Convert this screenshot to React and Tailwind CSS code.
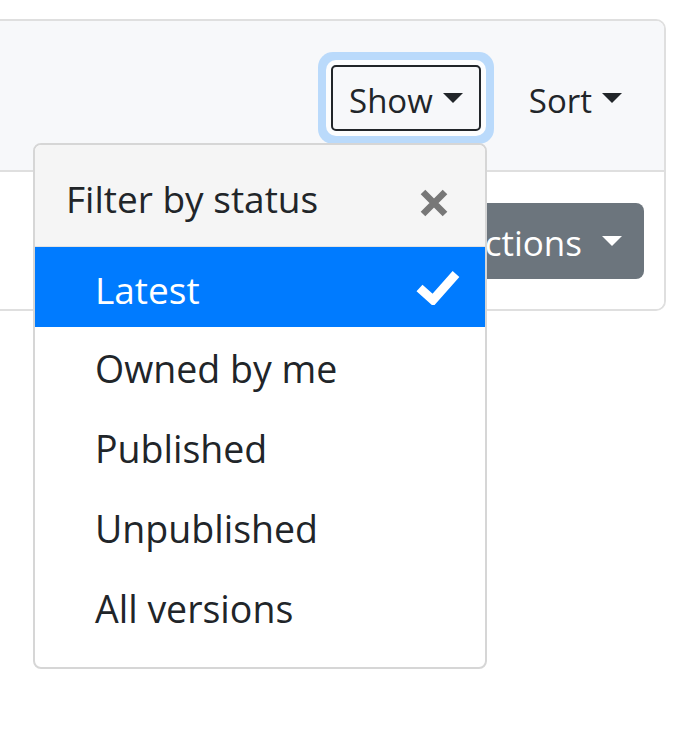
import React from "react";

function Caret({ color = "border-t-[#212529]" }) {
  return (
    <span
      className={`ml-[10px] inline-block w-0 h-0 border-t-[10px] border-x-[10.5px] border-x-transparent ${color}`}
    />
  );
}

function CloseIcon() {
  return (
    <svg width="28" height="28" viewBox="0 0 28 28" className="mt-[14px]">
      <path d="M3 3 L25 25 M25 3 L3 25" stroke="#777777" strokeWidth="6.5" strokeLinecap="butt" />
    </svg>
  );
}

function CheckIcon() {
  return (
    <svg width="44" height="36" viewBox="0 0 44 36">
      <path
        d="M3.5 19 L17 31 L40 5"
        fill="none"
        stroke="#ffffff"
        strokeWidth="9"
        strokeLinecap="butt"
        strokeLinejoin="miter"
      />
    </svg>
  );
}

const items = ["Owned by me", "Published", "Unpublished", "All versions"];

export default function App() {
  return (
    <div className="relative w-[679px] h-[729px] bg-white overflow-hidden font-['Open_Sans',sans-serif] text-[#212529]">
      {/* Card */}
      <div className="ml-[-20px] mt-[19px] w-[686px] rounded-[10px] border-2 border-[#dfdfdf] overflow-hidden">
        <div className="h-[151px] bg-[#f7f8fa] border-b-2 border-[#dfdfdf] flex items-center justify-end gap-[29px] pr-[23px] pt-[5px]">
          <button className="h-[66px] px-[16px] flex items-center rounded-[5px] border-2 border-[#212529] text-[33px] leading-none ring-[8px] ring-[#badafb] ring-offset-[5px] ring-offset-[#fcfdfe]">
            <span className="pt-[4px]">Show</span>
            <Caret />
          </button>
          <button className="h-[66px] px-[19px] flex items-center text-[33px] leading-none">
            <span className="pt-[4px]">Sort</span>
            <Caret />
          </button>
        </div>
        <div className="h-[137px] bg-white flex items-center justify-end pr-[20px]">
          <button className="h-[76px] pl-[24px] pr-[22px] flex items-center rounded-[8px] bg-[#6c757d] text-white text-[35px] leading-none">
            <span className="pt-[4px]">Actions</span>
            <span className="ml-[20px] inline-block w-0 h-0 border-t-[10px] border-x-[10.5px] border-x-transparent border-t-white" />
          </button>
        </div>
      </div>

      {/* Dropdown menu */}
      <div className="absolute left-[33px] top-[143px] w-[454px] rounded-[8px] border-2 border-[#d6d6d6] bg-white overflow-hidden pb-[20px]">
        <div className="h-[102px] bg-[#f5f5f5] border-b border-[#e2e2e2] flex items-center justify-between pl-[31px] pr-[37px]">
          <span className="text-[37px] leading-none pt-[6px]">Filter by status</span>
          <CloseIcon />
        </div>
        <div className="h-[80px] bg-[#007bff] text-white flex items-center justify-between pl-[60px] pr-[25px]">
          <span className="text-[37px] leading-none pt-[4px]">Latest</span>
          <CheckIcon />
        </div>
        {items.map((t) => (
          <div key={t} className="h-[80px] flex items-center pl-[60px]">
            <span className="text-[37.5px] leading-none pt-[4px]">{t}</span>
          </div>
        ))}
      </div>
    </div>
  );
}
